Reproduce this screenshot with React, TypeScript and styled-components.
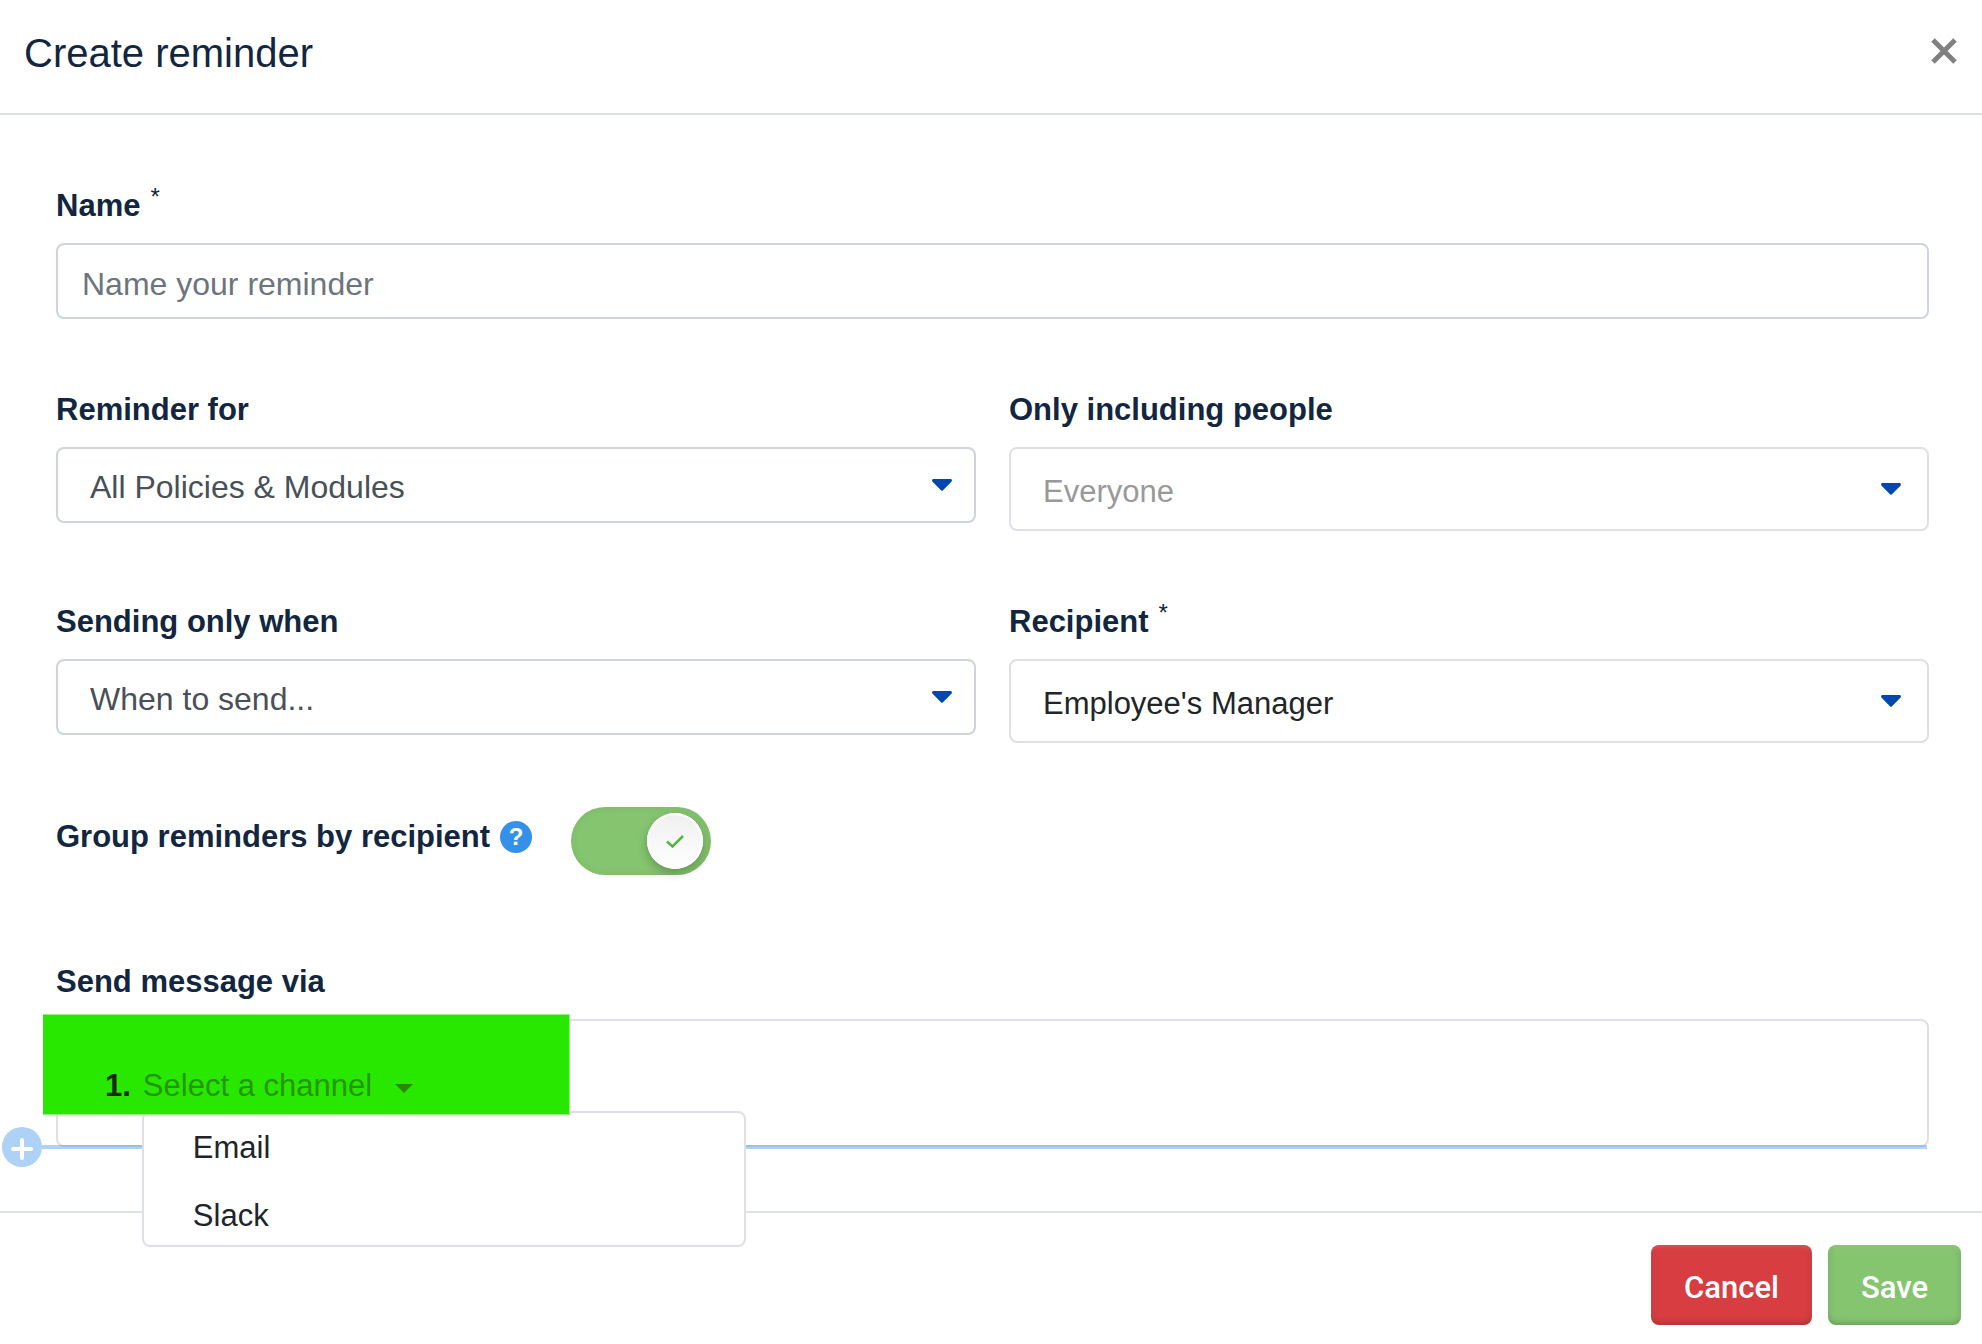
import React, { useState } from 'react';
import styled, { createGlobalStyle } from 'styled-components';

const sans = '"Liberation Sans", Arial, sans-serif';

const GlobalStyle = createGlobalStyle`
  * { box-sizing: border-box; }
  html, body { margin: 0; background: #fff; }
  body { font-family: ${sans}; color: #212529; }
  button, input, select { font-family: inherit; margin: 0; }
`;

const Header = styled.header`
  display: flex;
  justify-content: space-between;
  align-items: flex-start;
  padding: 29px 25px 36px 24px;
  border-bottom: 2px solid #dee2e6;
`;

const Title = styled.h1`
  margin: 0;
  font-size: 40px;
  line-height: 48px;
  font-weight: 400;
  color: #12263f;
`;

const CloseButton = styled.button`
  display: flex;
  align-items: center;
  height: 44px;
  padding: 0;
  border: 0;
  background: none;
  color: #808080;
  cursor: pointer;
`;

const Body = styled.main`
  display: flex;
  flex-direction: column;
  gap: 66px;
  padding: 66px 53px 64px 56px;
`;

const Columns = styled.div`
  display: grid;
  grid-template-columns: 1fr 1fr;
  align-items: start;
  gap: 33px;
`;

const Field = styled.div`
  display: flex;
  flex-direction: column;
  gap: 12px;
`;

const Label = styled.label`
  font-size: 31px;
  line-height: 50px;
  font-weight: 700;
  color: #12263f;
`;

const Heading = styled(Label).attrs({ as: 'h2' })`
  margin: 0;
`;

const Required = styled.span`
  display: inline-block;
  vertical-align: top;
  margin-left: 10px;
  font-size: 24px;
  line-height: 32px;
  font-weight: 400;
`;

const TextInput = styled.input`
  width: 100%;
  height: 76px;
  padding: 6px 24px 0;
  border: 2px solid #ced4da;
  border-radius: 8px;
  background: #fff;
  font-size: 32px;
  color: #495057;
  &::placeholder { color: #6c757d; opacity: 1; }
`;

type Variant = 'compact' | 'tall';

const SelectBox = styled.div<{ $variant: Variant }>`
  display: grid;
  grid-template-columns: 1fr auto;
  align-items: center;
  height: ${p => (p.$variant === 'tall' ? 84 : 76)}px;
  > * { grid-row: 1; }
  > svg {
    grid-column: 2;
    margin-right: ${p => (p.$variant === 'tall' ? 28 : 24)}px;
    pointer-events: none;
  }
`;

const Select = styled.select<{ $variant: Variant; $muted?: boolean }>`
  grid-column: 1 / 3;
  width: 100%;
  height: 100%;
  appearance: none;
  padding: 4px 64px 0 32px;
  border: 2px solid ${p => (p.$variant === 'tall' ? '#dfdfe5' : '#ced4da')};
  border-radius: 8px;
  background: #fff;
  font-size: ${p => (p.$variant === 'tall' ? 31 : 32)}px;
  color: ${p => (p.$muted ? '#999' : p.$variant === 'tall' ? '#212529' : '#495057')};
`;

const GroupRow = styled.div`
  display: flex;
  align-items: center;
  height: 68px;
  margin: -2px 0 16px;
`;

const GroupLabel = styled.div`
  display: flex;
  align-items: center;
  gap: 10px;
  margin-right: 39px;
  padding-bottom: 8px;
`;

const HelpButton = styled.button`
  width: 32px;
  height: 32px;
  padding: 0;
  border: 0;
  border-radius: 50%;
  background: #3490e9;
  color: #fff;
  font-size: 24px;
  line-height: 32px;
  font-weight: 700;
  text-align: center;
`;

const Toggle = styled.span`
  position: relative;
  display: block;
  width: 140px;
  height: 68px;
`;

const ToggleInput = styled.input`
  appearance: none;
  display: block;
  width: 100%;
  height: 100%;
  border-radius: 34px;
  background: #c4c9cf;
  box-shadow: inset 0 0 8px rgba(0, 0, 0, 0.08);
  cursor: pointer;
  &:checked { background: #85c56f; }
`;

const Knob = styled.span<{ $on: boolean }>`
  position: absolute;
  top: 6px;
  ${p => (p.$on ? 'right' : 'left')}: 8px;
  display: flex;
  align-items: center;
  justify-content: center;
  width: 56px;
  height: 56px;
  border-radius: 50%;
  background: linear-gradient(#efefef, #fff);
  box-shadow: inset 0 0 0 2px #fff, 0 4px 10px rgba(0, 0, 0, 0.25);
  pointer-events: none;
`;

const Channels = styled.div`
  position: relative;
  padding: 40px 47px 34px;
  border: 2px solid #dfdfe5;
  border-radius: 8px;
`;

const Step = styled.div`
  display: flex;
  gap: 12px;
  font-size: 31px;
  line-height: 50px;
`;

const StepNumber = styled.span`
  position: relative;
  z-index: 4;
  font-weight: 700;
  color: #172a08;
`;

const Picker = styled.div`
  position: relative;
`;

const PickerButton = styled.button`
  position: relative;
  z-index: 4;
  display: flex;
  align-items: center;
  gap: 23px;
  padding: 0;
  border: 0;
  background: none;
  font-size: 31px;
  line-height: 50px;
  color: #269600;
  > svg { margin-top: 4px; }
`;

const Menu = styled.div`
  position: absolute;
  z-index: 2;
  top: 50px;
  left: -1px;
  display: flex;
  flex-direction: column;
  gap: 18px;
  width: 604px;
  padding: 10px 0 4px;
  border: 2px solid #dfdfe5;
  border-radius: 8px;
  background: #fff;
`;

const MenuItem = styled.button`
  padding: 0 49px;
  border: 0;
  background: none;
  font-size: 31px;
  line-height: 50px;
  text-align: left;
  color: #212529;
`;

/* Sits across the bottom border of the channel list. */
const InsertLine = styled.div`
  position: absolute;
  z-index: 1;
  bottom: -22px;
  left: -56px;
  right: 0;
  display: flex;
  align-items: center;
  opacity: 0.4;
  &::after {
    content: '';
    flex: 1;
    height: 4px;
    background: #3490ea;
  }
`;

const InsertButton = styled.button`
  display: flex;
  align-items: center;
  justify-content: center;
  width: 40px;
  height: 40px;
  padding: 4px 0 0;
  border: 0;
  border-radius: 50%;
  background: #3490ea;
`;

/* Marker over the box and the menu edge, under the step's own text. */
const Highlight = styled.div`
  position: absolute;
  z-index: 3;
  top: -7px;
  left: -15px;
  width: 527px;
  height: 101px;
  border: 1px solid #93f27f;
  border-left: 0;
  background: #28e800;
  pointer-events: none;
`;

const Footer = styled.footer`
  display: flex;
  justify-content: flex-end;
  gap: 16px;
  padding: 32px 21px 19px;
  border-top: 2px solid #dee2e6;
`;

const ActionButton = styled.button<{ $color: string }>`
  height: 80px;
  padding: 4px 33px 0;
  border: 0;
  border-radius: 8px;
  background: ${p => p.$color};
  box-shadow: inset 0 2px 4px rgba(255, 255, 255, 0.15), inset 0 -2px 6px rgba(0, 0, 0, 0.22);
  font-family: Roboto, ${sans};
  font-size: 31px;
  font-weight: 500;
  color: #fff;
`;

const Arrow = () => (
  <svg width="20" height="12" viewBox="0 0 20 12" aria-hidden="true">
    <path d="M1.5 0h17C20 0 20.300 1.800 19.400 2.800L11 11.300a1.400 1.400 0 0 1-2 0L.6 2.800C-.3 1.800 0 0 1.500 0z" fill="#0048b0" />
  </svg>
);

interface SelectFieldProps {
  id: string;
  label: string;
  value: string;
  variant: Variant;
  muted?: boolean;
  required?: boolean;
}

const SelectField = ({ id, label, value, variant, muted, required }: SelectFieldProps) => (
  <Field>
    <Label htmlFor={id}>
      {label}
      {required && <Required>*</Required>}
    </Label>
    <SelectBox $variant={variant}>
      <Select id={id} $variant={variant} $muted={muted}>
        <option>{value}</option>
      </Select>
      <Arrow />
    </SelectBox>
  </Field>
);

export default function App() {
  const [grouped, setGrouped] = useState(true);

  return (
    <>
      <GlobalStyle />
      <Header>
        <Title>Create reminder</Title>
        <CloseButton aria-label="Close">
          <svg width="26" height="26" viewBox="0 0 26 26" aria-hidden="true">
            <path d="M2 2l22 22M24 2L2 24" stroke="currentColor" strokeWidth="5" />
          </svg>
        </CloseButton>
      </Header>

      <Body>
        <Field>
          <Label htmlFor="name">
            Name<Required>*</Required>
          </Label>
          <TextInput id="name" placeholder="Name your reminder" />
        </Field>

        <Columns>
          <SelectField id="for" label="Reminder for" value="All Policies &amp; Modules" variant="compact" />
          <SelectField id="people" label="Only including people" value="Everyone" variant="tall" muted />
        </Columns>

        <Columns>
          <SelectField id="when" label="Sending only when" value="When to send..." variant="compact" />
          <SelectField id="recipient" label="Recipient" value="Employee's Manager" variant="tall" required />
        </Columns>

        <GroupRow>
          <GroupLabel>
            <Label htmlFor="group">Group reminders by recipient</Label>
            <HelpButton aria-label="Help">?</HelpButton>
          </GroupLabel>
          <Toggle>
            <ToggleInput
              id="group"
              type="checkbox"
              checked={grouped}
              onChange={e => setGrouped(e.target.checked)}
            />
            <Knob $on={grouped}>
              {grouped && (
                <svg width="20" height="14" viewBox="0 0 20 14" fill="none" aria-hidden="true">
                  <path d="M2 7.500L7.500 12.500L18 2" stroke="#58b447" strokeWidth="2.500" />
                </svg>
              )}
            </Knob>
          </Toggle>
        </GroupRow>

        <Field>
          <Heading>Send message via</Heading>
          <Channels>
            <Step>
              <StepNumber>1.</StepNumber>
              <Picker>
                <PickerButton aria-haspopup="listbox" aria-expanded="true">
                  Select a channel
                  <svg width="18" height="9" viewBox="0 0 18 9" aria-hidden="true">
                    <path d="M0 0h18L9 9z" fill="#268a00" />
                  </svg>
                </PickerButton>
                <Menu role="listbox">
                  <MenuItem role="option">Email</MenuItem>
                  <MenuItem role="option">Slack</MenuItem>
                </Menu>
              </Picker>
            </Step>
            <InsertLine>
              <InsertButton aria-label="Add step">
                <svg width="22" height="22" viewBox="0 0 22 22" aria-hidden="true">
                  <path d="M11 2v18M2 11h18" stroke="#fff" strokeWidth="4" strokeLinecap="round" />
                </svg>
              </InsertButton>
            </InsertLine>
            <Highlight />
          </Channels>
        </Field>
      </Body>

      <Footer>
        <ActionButton $color="#d83d42">Cancel</ActionButton>
        <ActionButton $color="#85c56f">Save</ActionButton>
      </Footer>
    </>
  );
}
